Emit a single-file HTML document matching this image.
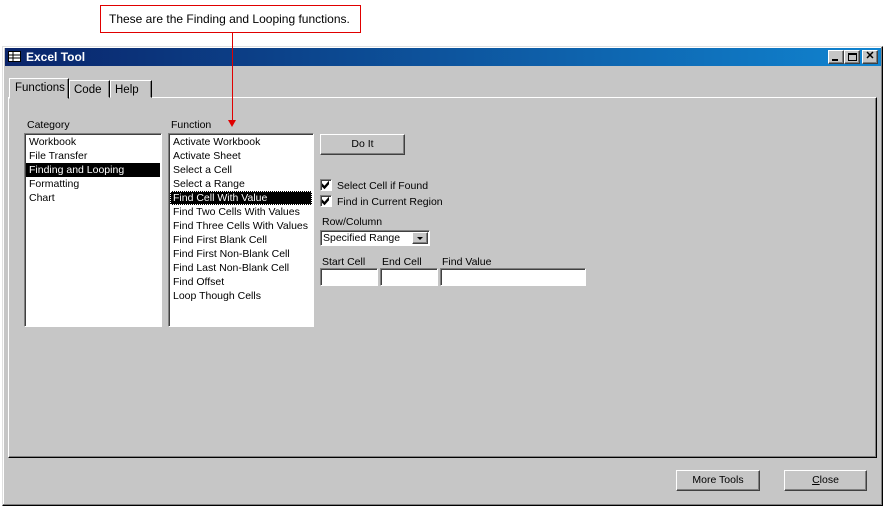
<!DOCTYPE html>
<html><head><style>
*{margin:0;padding:0;box-sizing:border-box}
body{width:888px;height:508px;background:#fff;position:relative;overflow:hidden;font-family:"Liberation Sans",sans-serif;font-size:10.5px;color:#000}
.a{position:absolute}
.raised{background:#c6c6c6;border:1px solid;border-color:#fff #404040 #404040 #fff;box-shadow:inset -1px -1px 0 #808080}
.sunk{background:#fff;border:1px solid;border-color:#808080 #fff #fff #808080;box-shadow:inset 1px 1px 0 #404040}
.lst div{height:14px;line-height:14px;padding-left:3px;white-space:nowrap}
.sel{background:#000;color:#fff}
.btn{text-align:center;line-height:18px}
.cb{width:12px;height:12px}
</style></head><body>
<div class="a" style="left:2px;top:46px;width:881px;height:460px;background:#c6c6c6;border:1px solid;border-color:#e0e0e0 #000 #000 #e0e0e0;box-shadow:inset -1px -1px 0 #808080,inset 1px 1px 0 #fff"></div>
<div class="a" style="left:5px;top:48px;width:876px;height:18px;background:linear-gradient(to right,#0a246a,#1084d0)"></div>
<svg class="a" style="left:8px;top:51px" width="13" height="11"><rect x="0.5" y="0.5" width="12" height="10" fill="#fff" stroke="#000"/><line x1="0" y1="4" x2="13" y2="4" stroke="#000"/><line x1="0" y1="7" x2="13" y2="7" stroke="#000"/><line x1="5" y1="0" x2="5" y2="11" stroke="#000"/></svg>
<div class="a" style="left:26px;top:49px;color:#fff;font-weight:bold;font-size:12px;line-height:16px">Excel Tool</div>
<div class="a raised" style="left:828px;top:50px;width:16px;height:14px"><div class="a" style="left:3px;top:8px;width:6px;height:2px;background:#000"></div></div>
<div class="a raised" style="left:844px;top:50px;width:16px;height:14px"><div class="a" style="left:3px;top:2px;width:9px;height:8px;border:1px solid #000;border-top-width:2px"></div></div>
<div class="a raised" style="left:862px;top:50px;width:16px;height:14px;font-weight:bold;font-size:11px;text-align:center;line-height:11px">✕</div>

<div class="a" style="left:8px;top:97px;width:869px;height:361px;border:1px solid;border-color:#fff #000 #000 #fff;box-shadow:inset -1px -1px 0 #808080"></div>
<div class="a" style="left:69px;top:80px;width:41px;height:18px;border:1px solid;border-color:#fff #000 transparent #fff;box-shadow:inset -1px 0 0 #808080;background:#c6c6c6;padding:3px 0 0 4px;font-size:11.5px">Code</div>
<div class="a" style="left:110px;top:80px;width:42px;height:18px;border:1px solid;border-color:#fff #000 transparent #fff;box-shadow:inset -1px 0 0 #808080;background:#c6c6c6;padding:3px 0 0 4px;font-size:11.5px">Help</div>
<div class="a" style="left:9px;top:78px;width:60px;height:21px;border:1px solid;border-color:#fff #000 transparent #fff;box-shadow:inset -1px 0 0 #808080;background:#c6c6c6;padding:3px 0 0 5px;font-size:11.5px">Functions</div>

<div class="a" style="left:27px;top:119px">Category</div>
<div class="a sunk lst" style="left:24px;top:133px;width:138px;height:194px;padding:1px 1px">
<div>Workbook</div><div>File Transfer</div><div class="sel">Finding and Looping</div><div>Formatting</div><div>Chart</div></div>
<div class="a" style="left:171px;top:119px">Function</div>
<div class="a sunk lst" style="left:168px;top:133px;width:146px;height:194px;padding:1px 1px">
<div>Activate Workbook</div><div>Activate Sheet</div><div>Select a Cell</div><div>Select a Range</div><div class="sel" style="outline:1px dotted #fff;outline-offset:-1px">Find Cell With Value</div><div>Find Two Cells With Values</div><div>Find Three Cells With Values</div><div>Find First Blank Cell</div><div>Find First Non-Blank Cell</div><div>Find Last Non-Blank Cell</div><div>Find Offset</div><div>Loop Though Cells</div></div>

<div class="a raised btn" style="left:320px;top:134px;width:85px;height:21px">Do It</div>
<div class="a sunk cb" style="left:320px;top:179px"><svg width="10" height="10" style="position:absolute;left:0;top:0"><path d="M1.5 4.5l2 2 4-4.5v2l-4 4.5-2-2z" fill="#000" stroke="#000" stroke-width="1"/></svg></div>
<div class="a" style="left:337px;top:180px">Select Cell if Found</div>
<div class="a sunk cb" style="left:320px;top:195px"><svg width="10" height="10" style="position:absolute;left:0;top:0"><path d="M1.5 4.5l2 2 4-4.5v2l-4 4.5-2-2z" fill="#000" stroke="#000" stroke-width="1"/></svg></div>
<div class="a" style="left:337px;top:196px">Find in Current Region</div>
<div class="a" style="left:322px;top:216px">Row/Column</div>
<div class="a sunk" style="left:320px;top:230px;width:110px;height:16px;padding:1px 0 0 2px">Specified Range</div>
<div class="a raised" style="left:412px;top:232px;width:16px;height:12px"><svg width="14" height="10" style="position:absolute;left:0;top:0"><polygon points="4,4 10,4 7,7" fill="#000"/></svg></div>
<div class="a" style="left:322px;top:256px">Start Cell</div>
<div class="a" style="left:382px;top:256px">End Cell</div>
<div class="a" style="left:442px;top:256px">Find Value</div>
<div class="a sunk" style="left:320px;top:268px;width:58px;height:18px"></div>
<div class="a sunk" style="left:380px;top:268px;width:58px;height:18px"></div>
<div class="a sunk" style="left:440px;top:268px;width:146px;height:18px"></div>

<div class="a raised btn" style="left:676px;top:470px;width:84px;height:21px">More Tools</div>
<div class="a raised btn" style="left:784px;top:470px;width:83px;height:21px"><u>C</u>lose</div>

<div class="a" style="left:100px;top:5px;width:261px;height:28px;border:1px solid #e00000;background:#fff;padding:6px 0 0 8px;font-size:12px">These are the Finding and Looping functions.</div>
<div class="a" style="left:232px;top:33px;width:1px;height:90px;background:#e00000"></div>
<svg class="a" style="left:228px;top:120px" width="9" height="8"><polygon points="0,0 8,0 4,7" fill="#e00000"/></svg>
</body></html>
